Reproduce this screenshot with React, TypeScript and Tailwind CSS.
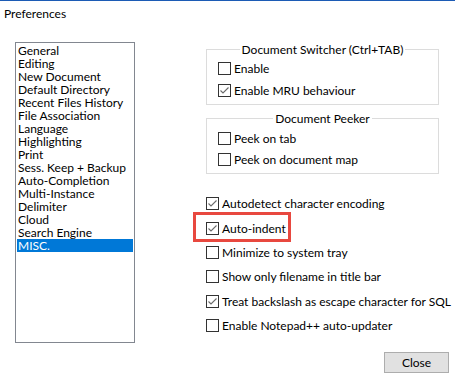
import React from 'react';

const categories = [
  'General',
  'Editing',
  'New Document',
  'Default Directory',
  'Recent Files History',
  'File Association',
  'Language',
  'Highlighting',
  'Print',
  'Sess. Keep + Backup',
  'Auto-Completion',
  'Multi-Instance',
  'Delimiter',
  'Cloud',
  'Search Engine',
  'MISC.',
];

const misc = [
  { label: 'Autodetect character encoding', checked: true, mt: 'mt-[23px]' },
  { label: 'Auto-indent', checked: true, mt: 'mt-[12px]', marked: true },
  { label: 'Minimize to system tray', checked: false, mt: 'mt-[11px]' },
  { label: 'Show only filename in title bar', checked: false, mt: 'mt-[11px]' },
  { label: 'Treat backslash as escape character for SQL', checked: true, mt: 'mt-[12px]' },
  { label: 'Enable Notepad++ auto-updater', checked: false, mt: 'mt-[11px]' },
];

const Check = ({ checked }: { checked: boolean }) => (
  <span className="w-[13px] h-[13px] shrink-0 border border-[#333333] bg-white flex items-center justify-center">
    {checked && (
      <svg width="11" height="11" viewBox="0 0 11 11" fill="none">
        <path d="M1.5 5.5 L4 8 L9.5 2.5" stroke="#6b6b6b" strokeWidth="1.1" />
      </svg>
    )}
  </span>
);

const CheckRow = ({
  label,
  checked,
  marked = false,
  className = '',
}: {
  label: string;
  checked: boolean;
  marked?: boolean;
  className?: string;
}) => (
  <div className={`relative h-[13px] flex items-center gap-[3px] ${className}`}>
    <Check checked={checked} />
    <span className="whitespace-nowrap leading-[16px]">{label}</span>
    {/* red highlight frame drawn over the row */}
    {marked && (
      <div className="absolute -left-[13px] -top-[10px] w-[98px] h-[30px] border-[3px] border-[#e8483f]" />
    )}
  </div>
);

const GroupBox = ({ title, children, className = '' }: { title: string; children: React.ReactNode; className?: string }) => (
  <div className={`relative w-[233px] h-[56px] border border-[#dcdcdc] ${className}`}>
    <div className="absolute -top-[8px] left-0 right-0 flex justify-center">
      <span className="bg-white px-[2px] leading-[16px] whitespace-nowrap">{title}</span>
    </div>
    {children}
  </div>
);

export default function App() {
  return (
    <div className="w-[455px] h-[384px] bg-white border-t border-[#1c5bb5] flex flex-col text-black text-[12px] font-['Lato',sans-serif] overflow-hidden">
      <div className="pl-[4px] pt-[5px] h-[21px] leading-[16px] text-[12px]">Preferences</div>

      <div className="flex mt-[20px]">
        <div className="ml-[15px] w-[120px] h-[301px] border border-[#828790] p-[1px]">
          {categories.map(c => (
            <div
              key={c}
              className={`h-[13px] leading-[13px] pl-[1px] whitespace-nowrap ${c === 'MISC.' ? 'bg-[#0078d7] text-white' : ''}`}
            >
              {c}
            </div>
          ))}
        </div>

        <div className="ml-[71px] mt-[7px] flex flex-col">
          <GroupBox title="Document Switcher (Ctrl+TAB)">
            <div className="pl-[11px] pt-[12px] flex flex-col gap-[9px]">
              <CheckRow label="Enable" checked={false} />
              <CheckRow label="Enable MRU behaviour" checked={true} />
            </div>
          </GroupBox>

          <GroupBox title="Document Peeker" className="mt-[13px]">
            <div className="pl-[11px] pt-[13px] flex flex-col gap-[8px]">
              <CheckRow label="Peek on tab" checked={false} />
              <CheckRow label="Peek on document map" checked={false} />
            </div>
          </GroupBox>

          {misc.map(m => (
            <CheckRow key={m.label} label={m.label} checked={m.checked} marked={m.marked} className={m.mt} />
          ))}
        </div>
      </div>

      <div className="flex justify-end pr-[6px] mt-[9px]">
        <button className="w-[65px] h-[21px] bg-[#e1e1e1] border border-[#adadad] leading-[16px] text-[12px]">
          Close
        </button>
      </div>
    </div>
  );
}
